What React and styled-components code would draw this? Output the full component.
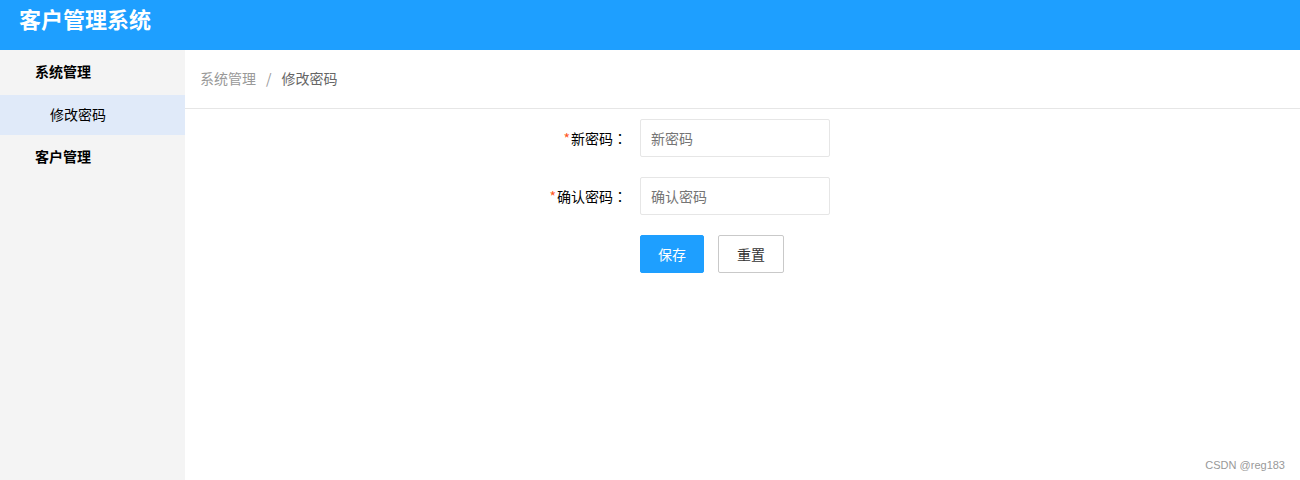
import React from "react";
import styled, { createGlobalStyle } from "styled-components";

const Global = createGlobalStyle`
  html, body { margin: 0; padding: 0; background: #fff; }
  body { font-family: "Noto Sans CJK SC", "Noto Sans", sans-serif; font-size: 14px; color: #333; }
  * { box-sizing: border-box; }
`;

const Page = styled.div`
  width: 1300px;
  height: 480px;
  display: flex;
  flex-direction: column;
  position: relative;
  overflow: hidden;
`;

const Header = styled.header`
  height: 50px;
  flex: none;
  background: #1e9fff;
  display: flex;
  align-items: flex-start;
  padding: 2px 0 0 19px;
`;

const Title = styled.h1`
  margin: 0;
  color: #fff;
  font-size: 22px;
  font-weight: 700;
  line-height: 32px;
`;

const Body = styled.div`
  flex: 1;
  display: flex;
  min-height: 0;
`;

const Sidebar = styled.nav`
  width: 185px;
  flex: none;
  background: #f4f4f4;
  display: flex;
  flex-direction: column;
`;

const NavGroup = styled.div`
  height: 45px;
  display: flex;
  align-items: center;
  padding: 0 0 3px 35px;
  font-weight: 700;
  color: #000;
  font-size: 14px;
`;

const NavItem = styled.div`
  height: 40px;
  display: flex;
  align-items: center;
  padding: 0 0 2px 50px;
  color: #000;
  background: ${(p) => (p.$active ? "#e0eaf9" : "transparent")};
`;

const Main = styled.main`
  flex: 1;
  display: flex;
  flex-direction: column;
`;

const Breadcrumb = styled.div`
  height: 59px;
  border-bottom: 1px solid #e6e6e6;
  display: flex;
  align-items: center;
  padding: 0 0 3px 15px;
  font-size: 14px;
`;

const Crumb = styled.span`
  color: ${(p) => (p.$current ? "#666" : "#999")};
`;

const Sep = styled.span`
  color: #999;
  margin: 0 10px;
`;

const Form = styled.form`
  display: grid;
  grid-template-columns: 455px 190px;
  row-gap: 20px;
  margin-top: 10px;
`;

const Label = styled.label`
  display: flex;
  align-items: center;
  justify-content: flex-end;
  padding: 0 13px 1px 0;
  color: #000;
  height: 38px;
`;

const Star = styled.span`
  color: #ff5722;
  margin-right: 1px;
`;

const Colon = styled.span`
  font-family: "Noto Sans CJK JP", "Noto Sans CJK SC", sans-serif;
`;

const Input = styled.input`
  width: 190px;
  height: 38px;
  border: 1px solid #e6e6e6;
  border-radius: 2px;
  padding: 0 10px 1px;
  font-family: inherit;
  font-size: 14px;
  color: #333;
  outline: none;
  &::placeholder { color: #757575; }
`;

const Buttons = styled.div`
  grid-column: 2;
  display: flex;
  gap: 14px;
  width: 300px;
`;

const Button = styled.button`
  height: 38px;
  padding: 0 17px 1px;
  font-family: inherit;
  font-size: 14px;
  border-radius: 2px;
  cursor: pointer;
  border: 1px solid ${(p) => (p.$primary ? "#1e9fff" : "#c9c9c9")};
  background: ${(p) => (p.$primary ? "#1e9fff" : "#fff")};
  color: ${(p) => (p.$primary ? "#fff" : "#333")};
  min-width: ${(p) => (p.$primary ? "64px" : "66px")};
`;

const Watermark = styled.div`
  position: absolute;
  right: 15px;
  bottom: 9px;
  font-family: "Liberation Sans", Arial, sans-serif;
  font-size: 11px;
  color: #999;
`;

export default function App() {
  return (
    <Page>
      <Global />
      <Header>
        <Title>客户管理系统</Title>
      </Header>
      <Body>
        <Sidebar>
          <NavGroup>系统管理</NavGroup>
          <NavItem $active>修改密码</NavItem>
          <NavGroup>客户管理</NavGroup>
        </Sidebar>
        <Main>
          <Breadcrumb>
            <Crumb>系统管理</Crumb>
            <Sep>/</Sep>
            <Crumb $current>修改密码</Crumb>
          </Breadcrumb>
          <Form onSubmit={(e) => e.preventDefault()}>
            <Label><Star>*</Star>新密码<Colon>：</Colon></Label>
            <Input type="password" placeholder="新密码" />
            <Label><Star>*</Star>确认密码<Colon>：</Colon></Label>
            <Input type="password" placeholder="确认密码" />
            <Buttons>
              <Button $primary type="submit">保存</Button>
              <Button type="reset">重置</Button>
            </Buttons>
          </Form>
        </Main>
      </Body>
      <Watermark>CSDN @reg183</Watermark>
    </Page>
  );
}
